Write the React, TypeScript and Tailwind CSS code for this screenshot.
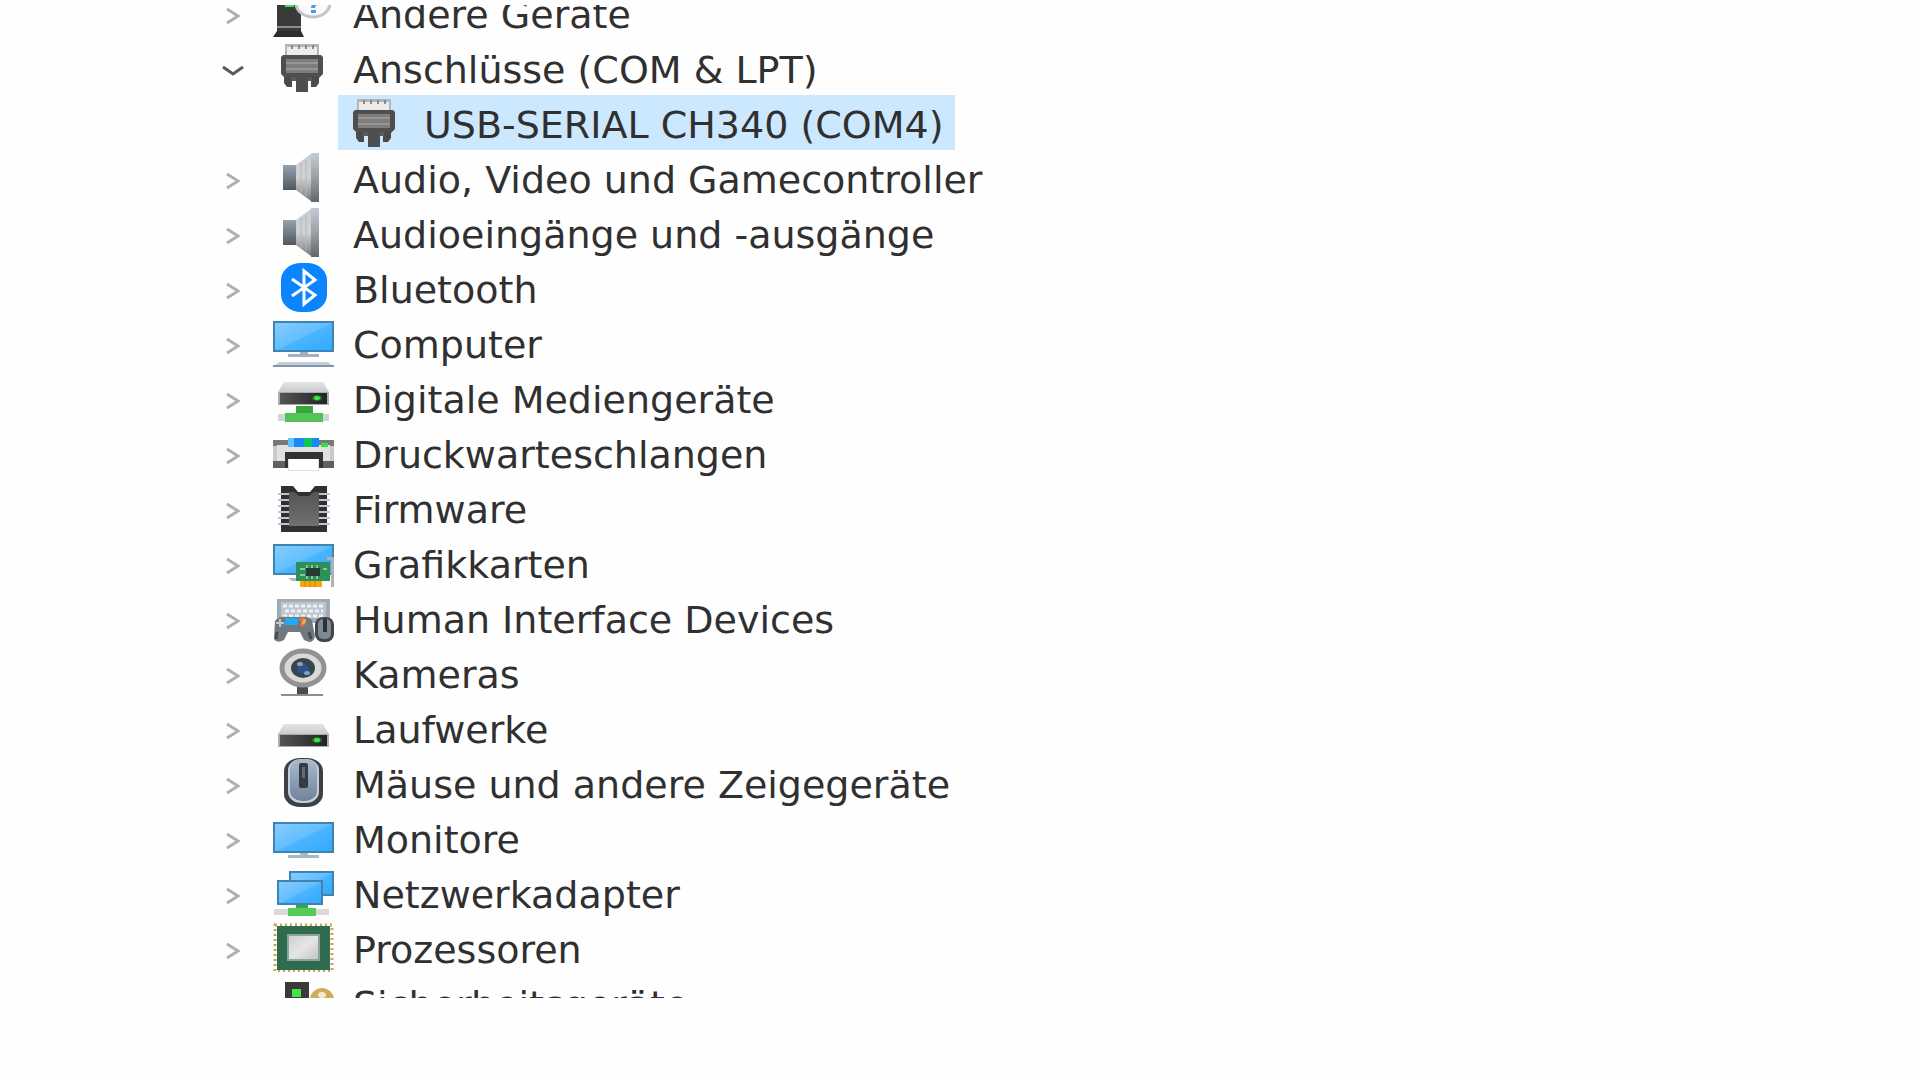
import { useState, type ReactNode } from "react";

function Defs() {
  return (
    <svg className="absolute size-0" aria-hidden="true">
      <defs>
        <linearGradient id="screen" x1="0" y1="0" x2="1" y2="1">
          <stop offset="0" stopColor="#88cdff" />
          <stop offset="0.5" stopColor="#62beff" />
          <stop offset="0.52" stopColor="#4bb5ff" />
          <stop offset="1" stopColor="#30a9fd" />
        </linearGradient>
        <linearGradient id="plate" x1="0" y1="0" x2="0" y2="1">
          <stop offset="0" stopColor="#c3ccd5" />
          <stop offset="0.5" stopColor="#9a9fa4" />
          <stop offset="1" stopColor="#62676c" />
        </linearGradient>
        <linearGradient id="cone" x1="0" y1="0" x2="0" y2="1">
          <stop offset="0" stopColor="#c8ccd0" />
          <stop offset="0.5" stopColor="#d2d2d2" />
          <stop offset="1" stopColor="#77797c" />
        </linearGradient>
        <linearGradient id="magnet" x1="0" y1="0" x2="0" y2="1">
          <stop offset="0" stopColor="#94a3b1" />
          <stop offset="1" stopColor="#50575e" />
        </linearGradient>
        <linearGradient id="lid" x1="0" y1="0" x2="0" y2="1">
          <stop offset="0" stopColor="#e4e5e6" />
          <stop offset="1" stopColor="#c9cbce" />
        </linearGradient>
        <linearGradient id="front" x1="0" y1="0" x2="1" y2="0">
          <stop offset="0" stopColor="#555555" />
          <stop offset="1" stopColor="#222222" />
        </linearGradient>
        <linearGradient id="chip" x1="0" y1="0" x2="0" y2="1">
          <stop offset="0" stopColor="#555555" />
          <stop offset="1" stopColor="#707070" />
        </linearGradient>
        <linearGradient id="silver" x1="0" y1="0" x2="1" y2="1">
          <stop offset="0" stopColor="#cfcfcf" />
          <stop offset="0.5" stopColor="#e6e6e6" />
          <stop offset="1" stopColor="#c4c4c4" />
        </linearGradient>
        <linearGradient id="mouse" x1="0" y1="0" x2="0" y2="1">
          <stop offset="0" stopColor="#a9bbcd" />
          <stop offset="1" stopColor="#70839a" />
        </linearGradient>
      </defs>
    </svg>
  );
}

function Screen({ x, y, w, h }: { x: number; y: number; w: number; h: number }) {
  return <rect x={x + 1} y={y + 1} width={w - 2} height={h - 2} fill="url(#screen)" stroke="#3f84b0" strokeWidth="2" />;
}

function Drive({ y }: { y: number }) {
  return (
    <g>
      <path d={`M11 ${y}H50L56 ${y + 10}H5Z`} fill="url(#lid)" />
      <rect x="5" y={y + 10} width="51" height="13" fill="#a9abae" />
      <rect x="7" y={y + 11} width="47" height="11" fill="url(#front)" />
      <ellipse cx="44" cy={y + 16} rx="5" ry="3" fill="#1f7a24" />
      <ellipse cx="44" cy={y + 16} rx="3" ry="2" fill="#3fe646" />
    </g>
  );
}

const icons: Record<string, ReactNode> = {
  unknown: (
    <>
      <rect x="4" y="0" width="24" height="43" fill="#3a3a3a" />
      <rect x="12" y="13" width="9" height="6" fill="#3fe646" />
      <rect x="4" y="38" width="24" height="2" fill="#8a8d90" />
      <path d="M4 43H28L31 49H0Z" fill="#2d2d2d" />
      <ellipse cx="40" cy="15" rx="17" ry="14" fill="#fafafa" stroke="#c2c5c8" strokeWidth="3" />
      <path d="M35 11C35 5 46 5 46 11C46 15 40 15 40 20" fill="none" stroke="#4d9be0" strokeWidth="4" />
      <rect x="38" y="22" width="5" height="3" fill="#4d9be0" />
    </>
  ),
  plug: (
    <>
      <rect x="12" y="1" width="34" height="13" fill="#b5b5b5" />
      <rect x="14" y="4" width="30" height="10" fill="#ececec" />
      <path d="M19 2v4M26 2v4M33 2v4M40 2v4" stroke="#8a8a8a" strokeWidth="2" />
      <path d="M10 12H48L50 14V31L46 35H12L8 31V14Z" fill="#4f4f4f" />
      <rect x="13" y="16" width="32" height="14" fill="#7e7e7e" />
      <path d="M13 20H45M13 26H45" stroke="#969696" strokeWidth="2" />
      <path d="M11 34h8v10h-5l-3-4ZM38 34h8v6l-3 4h-5Z" fill="#4a4a4a" />
      <rect x="18" y="34" width="21" height="4" fill="#5a5a5a" />
      <rect x="23" y="34" width="12" height="15" fill="#4f4f4f" />
    </>
  ),
  speaker: (
    <>
      <rect x="10" y="12" width="14" height="25" fill="url(#magnet)" />
      <path d="M23 12L38 1V48L23 37Z" fill="url(#cone)" />
      <path d="M28 10V40M33 7V43" stroke="#b4b6b8" />
      <rect x="38" y="0" width="8" height="49" fill="url(#plate)" />
    </>
  ),
  bluetooth: (
    <>
      <rect x="8" y="0" width="46" height="49" rx="20" ry="17" fill="#0a84ff" />
      <path d="M19 16L42 32L31 41V8L42 17L19 33" fill="none" stroke="#ffffff" strokeWidth="3" />
    </>
  ),
  computer: (
    <>
      <Screen x={0} y={3} w={61} h={31} />
      <path d="M27 34h8v2h11v3H15v-3h12Z" fill="#9fb1c3" />
      <path d="M6 44H55L61 49H0Z" fill="#c3cfda" />
      <path d="M0 48H61" stroke="#7f97ae" strokeWidth="2" />
    </>
  ),
  media: (
    <>
      <Drive y={9} />
      <rect x="5" y="41" width="51" height="7" fill="#d4d4d4" />
      <rect x="23" y="33" width="17" height="9" fill="#3aa63f" />
      <rect x="12" y="40" width="38" height="9" fill="#52c455" />
    </>
  ),
  printer: (
    <>
      <rect x="0" y="12" width="61" height="28" fill="#c9cacc" />
      <path d="M0 12H61V18H0Z" fill="#77797b" />
      <rect x="4" y="17" width="53" height="17" fill="#e0e1e3" />
      <path d="M0 33H12V40H0ZM50 33H61V40H50Z" fill="#5e6062" />
      <rect x="15" y="10" width="31" height="9" fill="#168bf5" />
      <rect x="15" y="10" width="6" height="9" fill="#62c1ff" />
      <rect x="31" y="10" width="8" height="9" fill="#12c45c" />
      <rect x="48" y="15" width="7" height="4" fill="#2ee62e" />
      <path d="M12 24H50V40H46V32H15V40H12Z" fill="#333333" />
      <rect x="15" y="31" width="31" height="12" fill="#e0e0e0" />
      <rect x="16" y="31" width="29" height="11" fill="#ffffff" />
    </>
  ),
  firmware: (
    <>
      <path d="M8 3H20L25 9H37L42 3H54V49H8Z" fill="#303030" />
      <path d="M16 9H21L26 13H36L41 9H46V43H16Z" fill="url(#chip)" />
      <path d="M5 11H16M5 17H16M5 23H16M5 29H16M5 35H16M5 41H16M46 11H57M46 17H57M46 23H57M46 29H57M46 35H57M46 41H57" stroke="#bcc4cd" strokeWidth="2" />
    </>
  ),
  graphics: (
    <>
      <Screen x={0} y={6} w={61} h={31} />
      <path d="M15 40H24V43H19Z" fill="#a9bac9" />
      <rect x="27" y="42" width="22" height="7" fill="#f5a70b" />
      <path d="M32 43v6M37 43v6M42 43v6" stroke="#cf850a" />
      <rect x="23" y="24" width="34" height="19" fill="#2e9057" />
      <rect x="33" y="30" width="14" height="8" fill="#263b31" />
      <path d="M34 27v3M39 27v3M44 27v3M34 38v3M39 38v3M44 38v3M27 31h5M27 37h5M50 31h4" stroke="#85c7a0" strokeWidth="2" />
      <path d="M54 19h7v30h-3V22h-4Z" fill="#afb2b5" />
    </>
  ),
  hid: (
    <>
      <path d="M4 6H57V30H4Z" fill="#a3abb4" />
      <rect x="8" y="9" width="45" height="16" fill="#bec5cc" />
      <path d="M10 13H51M12 18H50M10 23H51" stroke="#eef1f3" strokeWidth="3" strokeDasharray="4 2" />
      <path d="M2 28Q6 23 14 24H28Q36 23 39 28L42 43Q41 49 36 49L31 47L27 39H15L11 47Q4 51 1 46Z" fill="#71797f" />
      <path d="M4 39L3 46M36 39L38 46" stroke="#454b50" strokeWidth="3" />
      <rect x="12" y="25" width="13" height="7" fill="#25a8f5" />
      <path d="M7 26v8M3 30h8" stroke="#c3c7ca" strokeWidth="2" />
      <path d="M27 25l4 4-3 4" fill="none" stroke="#e46d4b" strokeWidth="4" />
      <path d="M32 26l-2 5" stroke="#d8b94a" strokeWidth="3" />
      <rect x="42" y="24" width="19" height="25" rx="8" fill="#40464c" />
      <rect x="45" y="26" width="13" height="20" rx="5" fill="#7d8995" />
      <rect x="50" y="26" width="4" height="13" fill="#2c3136" />
    </>
  ),
  camera: (
    <>
      <rect x="24" y="36" width="11" height="11" fill="#4c4c4c" />
      <rect x="8" y="46" width="42" height="2" fill="#8c8c8c" />
      <ellipse cx="30" cy="20" rx="21" ry="17" fill="#d9d9d9" stroke="#929292" strokeWidth="5" />
      <ellipse cx="30" cy="20" rx="12" ry="10" fill="#3a444e" />
      <ellipse cx="30" cy="21" rx="6" ry="5" fill="#2b528e" />
      <ellipse cx="27" cy="16" rx="3" ry="2" fill="#8ea1b2" />
      <ellipse cx="34" cy="25" rx="3" ry="2" fill="#78a6ca" />
    </>
  ),
  drive: <Drive y={21} />,
  mouse: (
    <>
      <rect x="11" y="0" width="39" height="49" rx="16" ry="13" fill="#3c4147" />
      <rect x="15" y="1" width="31" height="44" rx="13" ry="11" fill="#c3ced9" />
      <rect x="17" y="1" width="27" height="42" rx="12" ry="10" fill="url(#mouse)" />
      <rect x="26" y="5" width="9" height="25" rx="2" fill="#353b42" />
      <rect x="29" y="9" width="3" height="11" fill="#636a71" />
    </>
  ),
  monitor: (
    <>
      <Screen x={0} y={9} w={61} h={31} />
      <path d="M27 40h8v2h11v3H15v-3h12Z" fill="#a9b8c7" />
    </>
  ),
  network: (
    <>
      <Screen x={16} y={3} w={45} h={25} />
      <Screen x={4} y={12} w={46} h={25} />
      <rect x="1" y="41" width="55" height="6" fill="#d9d9d9" />
      <rect x="23" y="37" width="12" height="6" fill="#3aa63f" />
      <rect x="15" y="40" width="28" height="8" fill="#55cc58" />
    </>
  ),
  cpu: (
    <>
      <rect x="2" y="2" width="57" height="46" fill="none" stroke="#c9a652" strokeWidth="3" strokeDasharray="2 3" />
      <rect x="4" y="3" width="53" height="44" fill="#2f6b50" />
      <rect x="14" y="11" width="33" height="27" fill="#86a896" />
      <rect x="16" y="13" width="29" height="23" fill="url(#silver)" />
    </>
  ),
  security: (
    <>
      <rect x="12" y="4" width="24" height="45" fill="#3a3a3a" />
      <rect x="19" y="11" width="9" height="8" fill="#3fe646" />
      <ellipse cx="49" cy="22" rx="12" ry="12" fill="#cfab5e" />
      <ellipse cx="49" cy="17" rx="4" ry="3" fill="#f5ead0" />
    </>
  ),
};

type Device = { label: string; icon: string };
type Category = Device & { open?: boolean; children?: Device[] };

const categories: Category[] = [
  { label: "Andere Geräte", icon: "unknown" },
  {
    label: "Anschlüsse (COM & LPT)",
    icon: "plug",
    open: true,
    children: [{ label: "USB-SERIAL CH340 (COM4)", icon: "plug" }],
  },
  { label: "Audio, Video und Gamecontroller", icon: "speaker" },
  { label: "Audioeingänge und -ausgänge", icon: "speaker" },
  { label: "Bluetooth", icon: "bluetooth" },
  { label: "Computer", icon: "computer" },
  { label: "Digitale Mediengeräte", icon: "media" },
  { label: "Druckwarteschlangen", icon: "printer" },
  { label: "Firmware", icon: "firmware" },
  { label: "Grafikkarten", icon: "graphics" },
  { label: "Human Interface Devices", icon: "hid" },
  { label: "Kameras", icon: "camera" },
  { label: "Laufwerke", icon: "drive" },
  { label: "Mäuse und andere Zeigegeräte", icon: "mouse" },
  { label: "Monitore", icon: "monitor" },
  { label: "Netzwerkadapter", icon: "network" },
  { label: "Prozessoren", icon: "cpu" },
  { label: "Sicherheitsgeräte", icon: "security" },
];

function DeviceIcon({ name }: { name: string }) {
  return (
    <svg viewBox="0 0 61 49" className="h-[49px] w-[61px] shrink-0" aria-hidden="true">
      {icons[name]}
    </svg>
  );
}

function TreeItem({ category }: { category: Category }) {
  const [open, setOpen] = useState(Boolean(category.open));
  return (
    <li>
      <div className="flex h-[55px] items-center">
        <button
          type="button"
          aria-label={category.label}
          aria-expanded={open}
          onClick={() => setOpen(!open)}
          className="mr-7 flex h-full w-6 shrink-0 items-center justify-center pt-1.5"
        >
          {open ? (
            <svg viewBox="0 0 22 12" className="h-3 w-[22px]" fill="none" stroke="#5a5a5a" strokeWidth="3">
              <path d="M1 2L11 9L21 2" />
            </svg>
          ) : (
            <svg viewBox="0 0 14 18" className="h-[18px] w-3.5" fill="none" stroke="#b0b0b0" strokeWidth="3">
              <path d="M1 2L12 9L1 16" />
            </svg>
          )}
        </button>
        <DeviceIcon name={category.icon} />
        <span className="ml-[19px] pt-1">{category.label}</span>
      </div>
      {open && category.children && (
        <ul>
          {category.children.map((child) => (
            <li key={child.label} className="flex pl-[117px]">
              <button type="button" className="flex h-[55px] items-center bg-[#cce8ff] pr-3 pl-[7px]">
                <DeviceIcon name={child.icon} />
                <span className="ml-[18px] pt-1">{child.label}</span>
              </button>
            </li>
          ))}
        </ul>
      )}
    </li>
  );
}

export default function App() {
  return (
    <main className="flex h-screen flex-col bg-[#fefefe] pt-[5px] pb-[82px]">
      <Defs />
      <nav aria-label="Geräte-Manager" className="min-h-0 flex-1 overflow-hidden">
        <ul className="-mt-5 pl-[221px] font-['DejaVu_Sans','Open_Sans',sans-serif] text-[38px] leading-[48px] whitespace-nowrap text-[#303030]">
          {categories.map((category) => (
            <TreeItem key={category.label} category={category} />
          ))}
        </ul>
      </nav>
    </main>
  );
}
